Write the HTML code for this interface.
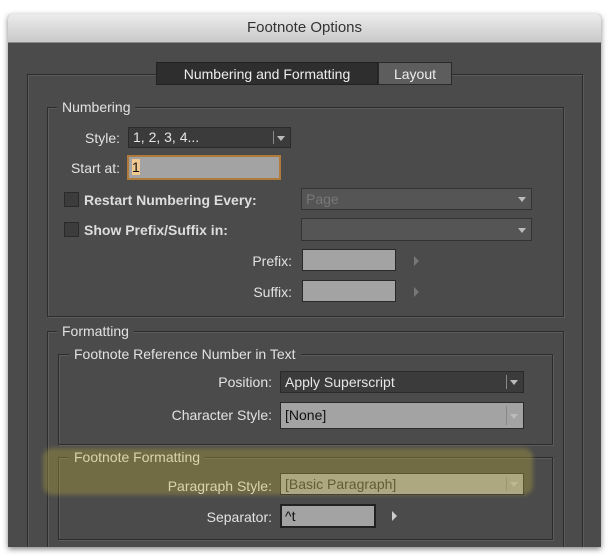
<!DOCTYPE html>
<html><head><style>
body{margin:0;width:611px;height:556px;background:#fff;position:relative;overflow:hidden;font-family:"Liberation Sans",sans-serif;}
.a{position:absolute;}
.dlg{left:8px;top:14px;width:593px;height:533px;background:#4b4b4b;box-shadow:0 2px 6px rgba(0,0,0,.5);border-radius:4px 4px 0 0;overflow:hidden;}
.title{left:0;top:0;width:593px;height:28px;background:linear-gradient(#ececec,#c9c9c9);border-bottom:1px solid #888;text-align:center;line-height:28px;font-size:15px;color:#333;}
.box{position:absolute;border:1px solid #2c2c2c;box-shadow:1px 1px 0 #5c5c5c, inset 1px 1px 0 #5c5c5c;}
.lbl{position:absolute;color:#e2e2e2;font-size:14px;background:#4b4b4b;padding:0 5px;line-height:16px;white-space:nowrap;}
.r{position:absolute;color:#e2e2e2;font-size:14px;text-align:right;white-space:nowrap;line-height:16px;}
.dd{position:absolute;background:#3b3b3b;border:1px solid #2a2a2a;box-sizing:border-box;color:#e6e6e6;font-size:14px;padding-left:4px;white-space:nowrap;}
.dd:after{content:"";position:absolute;right:5px;top:50%;margin-top:-2px;border-left:4px solid transparent;border-right:4px solid transparent;border-top:5px solid #bbb;}
.dd .sep{position:absolute;right:16px;top:3px;bottom:3px;width:1px;background:#888;}
.fld{position:absolute;background:#a3a3a3;border:1px solid #2a2a2a;box-sizing:border-box;color:#111;font-size:14px;padding-left:3px;}
.arr{position:absolute;width:0;height:0;border-top:5px solid transparent;border-bottom:5px solid transparent;border-left:5px solid #999;}
.cb{position:absolute;width:13px;height:13px;background:#3c3c3c;border:1px solid #2a2a2a;}
</style></head><body>
<div class="a dlg">
<div class="a title">Footnote Options</div>
<div style="position:absolute;left:-8px;top:-14px;width:611px;height:556px;">
<div class="box" style="left:27px;top:74px;width:554px;height:490px;"></div>
<div class="a" style="left:156px;top:62px;width:296px;height:23px;background:#4b4b4b;"></div>
<div class="a" style="left:156px;top:62px;width:222px;height:23px;background:#2e2e2e;border:1px solid #222;box-sizing:border-box;color:#eee;font-size:14px;text-align:center;line-height:22px;">Numbering and Formatting</div>
<div class="a" style="left:378px;top:62px;width:74px;height:23px;background:#5d5d5d;border:1px solid #2a2a2a;box-sizing:border-box;color:#eee;font-size:14px;text-align:center;line-height:22px;">Layout</div>

<div class="box" style="left:47px;top:107px;width:515px;height:208px;"></div>
<div class="lbl" style="left:57px;top:99px;">Numbering</div>
<div class="r" style="left:60px;top:130px;width:60px;">Style:</div>
<div class="dd" style="left:128px;top:127px;width:163px;height:21px;line-height:19px;">1, 2, 3, 4...<div class="sep"></div></div>
<div class="r" style="left:40px;top:160px;width:80px;">Start at:</div>
<div class="fld" style="left:127px;top:155px;width:154px;height:25px;border:2px solid #b07a3a;line-height:21px;"><span style="background:#f0c890">1</span></div>
<div class="cb" style="left:64px;top:192px;"></div>
<div class="r" style="left:84px;top:192px;text-align:left;font-weight:bold;color:#ddd">Restart Numbering Every:</div>
<div class="dd" style="left:301px;top:188px;width:231px;height:22px;line-height:20px;background:#555;color:#777;border-color:#333;">Page</div>
<div class="cb" style="left:64px;top:222px;"></div>
<div class="r" style="left:84px;top:222px;text-align:left;font-weight:bold;color:#ddd">Show Prefix/Suffix in:</div>
<div class="dd" style="left:301px;top:218px;width:231px;height:23px;background:#555;border-color:#333;"></div>
<div class="r" style="left:200px;top:253px;width:92px;">Prefix:</div>
<div class="fld" style="left:302px;top:249px;width:94px;height:22px;"></div>
<div class="arr" style="left:414px;top:256px;border-left-color:#777"></div>
<div class="r" style="left:200px;top:284px;width:92px;">Suffix:</div>
<div class="fld" style="left:302px;top:280px;width:94px;height:22px;"></div>
<div class="arr" style="left:414px;top:287px;border-left-color:#777"></div>

<div class="box" style="left:47px;top:331px;width:515px;height:240px;"></div>
<div class="lbl" style="left:57px;top:323px;">Formatting</div>
<div class="box" style="left:58px;top:354px;width:493px;height:89px;"></div>
<div class="lbl" style="left:69px;top:346px;">Footnote Reference Number in Text</div>
<div class="r" style="left:150px;top:374px;width:122px;">Position:</div>
<div class="dd" style="left:280px;top:371px;width:244px;height:22px;line-height:20px;">Apply Superscript<div class="sep"></div></div>
<div class="r" style="left:120px;top:407px;width:152px;">Character Style:</div>
<div class="dd" style="left:280px;top:402px;width:244px;height:27px;line-height:25px;background:#a3a3a3;color:#111;">[None]<div class="sep"></div></div>

<div class="box" style="left:58px;top:457px;width:493px;height:81px;"></div>
<div class="lbl" style="left:69px;top:449px;">Footnote Formatting</div>
<div class="r" style="left:120px;top:478px;width:152px;">Paragraph Style:</div>
<div class="dd" style="left:280px;top:473px;width:244px;height:22px;line-height:20px;background:#a3a3a3;color:#333;">[Basic Paragraph]<div class="sep"></div></div>
<div class="r" style="left:150px;top:509px;width:122px;">Separator:</div>
<div class="fld" style="left:280px;top:504px;width:96px;height:24px;border:2px solid #222;line-height:20px;">^t</div>
<div class="arr" style="left:392px;top:511px;border-left-color:#ccc"></div>

<div class="a" style="left:43px;top:448px;width:490px;height:47px;background:rgba(200,180,60,.32);border-radius:10px;filter:blur(2px);"></div>
</div>
</div>
</body></html>
